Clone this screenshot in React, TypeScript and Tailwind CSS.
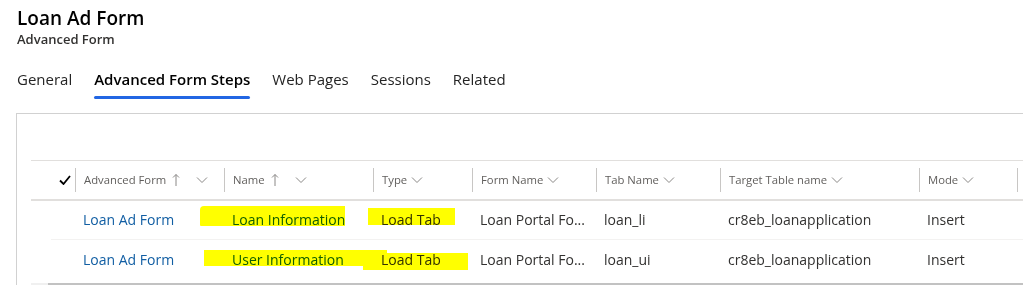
import React from 'react';

interface Column {
  label: string;
  width: number;
  sortUp?: boolean;
}

interface Row {
  form: string;
  name: string;
  type: string;
  formName: string;
  tabName: string;
  table: string;
  mode: string;
}

const columns: Column[] = [
  { label: 'Advanced Form', width: 149, sortUp: true },
  { label: 'Name', width: 149, sortUp: true },
  { label: 'Type', width: 99 },
  { label: 'Form Name', width: 124 },
  { label: 'Tab Name', width: 124 },
  { label: 'Target Table name', width: 199 },
  { label: 'Mode', width: 98 },
];

const rows: Row[] = [
  {
    form: 'Loan Ad Form',
    name: 'Loan Information',
    type: 'Load Tab',
    formName: 'Loan Portal Fo...',
    tabName: 'loan_li',
    table: 'cr8eb_loanapplication',
    mode: 'Insert',
  },
  {
    form: 'Loan Ad Form',
    name: 'User Information',
    type: 'Load Tab',
    formName: 'Loan Portal Fo...',
    tabName: 'loan_ui',
    table: 'cr8eb_loanapplication',
    mode: 'Insert',
  },
];

const tabs = ['General', 'Advanced Form Steps', 'Web Pages', 'Sessions', 'Related'];

const Chevron = () => (
  <svg width="12" height="8" viewBox="0 0 12 8" className="ml-1">
    <path d="M1 1.5 L6 6.5 L11 1.5" fill="none" stroke="#8a8886" strokeWidth="1" />
  </svg>
);

const ArrowUp = () => (
  <svg width="8" height="14" viewBox="0 0 8 14" className="ml-[6px]">
    <path d="M4 13 V1.5 M1 4.5 L4 1.5 L7 4.5" fill="none" stroke="#8a8886" strokeWidth="1" />
  </svg>
);

// highlighter marks drawn over the name / type cells
const Mark = ({ className }: { className: string }) => (
  <span className={`absolute bg-[#ffff00] mix-blend-multiply pointer-events-none ${className}`} />
);

const App = () => {
  return (
    <div
      className="w-[1023px] h-[285px] overflow-hidden bg-white text-[#323130]"
      style={{ fontFamily: '"Segoe UI", "Open Sans", "Noto Sans", sans-serif' }}
    >
      <div className="pl-[17px] pt-[5px]">
        <h1 className="text-[19px] font-semibold leading-[26px] text-black">Loan Ad Form</h1>
        <div className="text-[13px] font-semibold leading-[16px] text-[#323130]">Advanced Form</div>
      </div>

      <div className="flex pl-[17px] mt-[14px] gap-[22px] h-[40px]">
        {tabs.map((t) => (
          <div key={t} className="relative flex items-center h-[36px]">
            <span
              className={`text-[15px] ${
                t === 'Advanced Form Steps' ? 'font-semibold text-black' : 'text-[#242424]'
              }`}
            >
              {t}
            </span>
            {t === 'Advanced Form Steps' && (
              <span className="absolute left-0 right-0 bottom-[-2px] h-[3px] rounded-sm bg-[#2266e3]" />
            )}
          </div>
        ))}
      </div>

      <div className="ml-[16px] mt-[12px] w-[1100px] border-l border-t border-[#d1d1d1] pt-[46px] pl-[14px]">
        <div className="border-t border-[#e1dfdd]">
          <div className="flex h-[40px] border-b-2 border-[#e1dfdd]">
            <div className="w-[44px] flex items-center justify-end pr-[4px]">
              <svg width="12" height="10" viewBox="0 0 12 10">
                <path d="M1 5.5 L4.5 9 L11 1" fill="none" stroke="#000" strokeWidth="1.8" />
              </svg>
            </div>
            {columns.map((c) => (
              <div
                key={c.label}
                className="flex items-center border-l border-[#c8c6c4] h-[24px] my-auto pl-[8px] text-[11.3px] text-[#605e5c]"
                style={{ width: c.width }}
              >
                <span>{c.label}</span>
                {c.sortUp && <ArrowUp />}
                {c.sortUp ? <span className="ml-[12px] flex"><Chevron /></span> : <Chevron />}
              </div>
            ))}
            <div className="border-l border-[#c8c6c4] h-[24px] my-auto" />
          </div>

          {rows.map((r, i) => (
            <div
              key={r.name}
              className={`flex h-[39px] items-center text-[14px] leading-[20px] ${
                i === 0 ? 'border-b border-[#f3f2f1] ml-[20px]' : ''
              }`}
            >
              <div className={i === 0 ? 'w-[24px]' : 'w-[44px]'} />
              <div className="pl-[8px] w-[149px] text-[#115ea3]">{r.form}</div>
              <div className="relative pl-[8px] w-[149px] text-[#115ea3]">
                {r.name}
                {i === 0 ? (
                  <Mark className="left-[-24px] right-[28px] top-[-4px] bottom-[4px] rounded-tl-[4px] rounded-bl-[1px]" />
                ) : (
                  <Mark className="left-[-20px] right-[-14px] top-[0px] bottom-[4px]" />
                )}
              </div>
              <div className="relative pl-[8px] w-[99px]">
                {r.type}
                {i === 0 ? (
                  <Mark className="left-[-5px] right-[17px] top-[-2px] bottom-[5px]" />
                ) : (
                  <Mark className="left-[-10px] right-[4px] top-[3px] bottom-[0px]" />
                )}
              </div>
              <div className="pl-[8px] w-[124px]">{r.formName}</div>
              <div className="pl-[8px] w-[124px]">{r.tabName}</div>
              <div className="pl-[8px] w-[199px]">{r.table}</div>
              <div className="pl-[8px] w-[98px]">{r.mode}</div>
            </div>
          ))}

          <div className="h-[8px] bg-[#f0f0f0] pl-[17px]">
            <div className="h-[4px] mt-[4px] bg-[#c2c2c2]" />
          </div>
        </div>
      </div>
    </div>
  );
};

export default App;
